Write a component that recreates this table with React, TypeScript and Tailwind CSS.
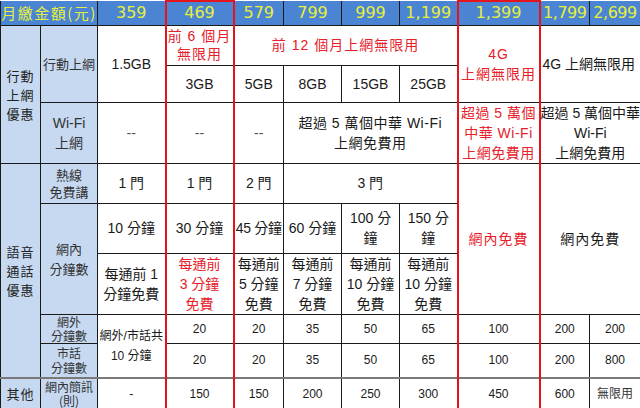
const RED_COL =
  "border-l-2 border-r-2 border-l-[#e3141c] border-r-[#e3141c]";
const TD = "border border-[#1a1a1a] p-0 text-center align-middle";
const CAT =
  "border border-[#1a1a1a] p-0 text-center align-middle bg-[#c6d9f1] font-['Noto_Sans_CJK_TC',sans-serif] text-[13px] leading-[19px] tracking-[1px] text-[#222]";
// sub column: size / leading / font are added per cell
const SUB =
  "border border-[#1a1a1a] p-0 text-center align-middle bg-[#c6d9f1] text-[#333]";
const CJK = "font-['Noto_Sans_CJK_TC',sans-serif]";
const HEAD =
  "border border-[#1a1a1a] border-t-0 p-0 text-center align-middle font-['DejaVu_Sans',sans-serif] text-[16px] font-normal text-[#e6f03c]";
const RED = "text-[#e8202a]";
const TOP_GRAY = "border-t-2 border-t-[#7a7a7a]";

function Lines({ children }: { children: string }) {
  const parts = children.split("\n");
  return (
    <>
      {parts.map((p, i) => (
        <div key={i} className="whitespace-nowrap">
          {p}
        </div>
      ))}
    </>
  );
}

export default function App() {
  const widths = [40, 57, 68, 68, 50, 58, 58, 58, 82, 50, 51];

  return (
    <div className="w-[640px] h-[408px] overflow-hidden bg-white">
      <table className="w-[640px] table-fixed border-collapse font-['Liberation_Sans','Noto_Sans_CJK_TC',sans-serif] text-[14px] leading-[20px] text-[#1a1a1a]">
        <colgroup>
          {widths.map((w, i) => (
            <col key={i} style={{ width: w }} />
          ))}
        </colgroup>
        <tbody>
          {/* header */}
          <tr className="h-[24px] bg-[#4a84d2]">
            <th
              colSpan={2}
              className="border border-[#1a1a1a] border-t-0 p-0 text-center align-middle font-['Noto_Sans_CJK_TC',sans-serif] text-[15px] font-normal tracking-[1.5px] text-[#e6f03c] whitespace-nowrap"
            >
              月繳金額(元)
            </th>
            <th className={HEAD}>359</th>
            <th className={`${HEAD} ${RED_COL} border-t-2 border-t-[#e3141c]`}>469</th>
            <th className={HEAD}>579</th>
            <th className={HEAD}>799</th>
            <th className={HEAD}>999</th>
            <th className={HEAD}>1,199</th>
            <th className={`${HEAD} ${RED_COL} border-t-2 border-t-[#e3141c]`}>1,399</th>
            <th className={`${HEAD} tracking-[-0.5px]`}>1,799</th>
            <th className={`${HEAD} tracking-[-0.5px]`}>2,699</th>
          </tr>

          {/* 行動上網 */}
          <tr className="h-[40px]">
            <td rowSpan={3} className={CAT}>
              <Lines>{"行動\n上網\n優惠"}</Lines>
            </td>
            <td rowSpan={2} className={`${SUB} ${CJK} text-[13px]`}>
              行動上網
            </td>
            <td rowSpan={2} className={TD}>
              1.5GB
            </td>
            <td className={`${TD} ${RED_COL} ${RED} leading-[18px] tracking-[1px]`}>
              <Lines>{"前 6 個月\n無限用"}</Lines>
            </td>
            <td colSpan={4} className={`${TD} ${RED} tracking-[1px]`}>
              前 12 個月上網無限用
            </td>
            <td rowSpan={2} className={`${TD} ${RED_COL} ${RED} tracking-[1px]`}>
              <Lines>{"4G\n上網無限用"}</Lines>
            </td>
            <td rowSpan={2} colSpan={2} className={`${TD} text-left pl-[2px]`}>
              4G 上網無限用
            </td>
          </tr>
          <tr className="h-[37px]">
            <td className={`${TD} ${RED_COL}`}>3GB</td>
            <td className={TD}>5GB</td>
            <td className={TD}>8GB</td>
            <td className={TD}>15GB</td>
            <td className={TD}>25GB</td>
          </tr>

          {/* Wi-Fi */}
          <tr className="h-[60px]">
            <td className={`${SUB} text-[14px] leading-[20px]`}>
              <Lines>{"Wi-Fi\n上網"}</Lines>
            </td>
            <td className={`${TD} text-[#555]`}>--</td>
            <td className={`${TD} ${RED_COL} text-[#555]`}>--</td>
            <td className={`${TD} text-[#555]`}>--</td>
            <td colSpan={3} className={`${TD} tracking-[0.5px]`}>
              <Lines>{"超過 5 萬個中華  Wi-Fi\n上網免費用"}</Lines>
            </td>
            <td className={`${TD} ${RED_COL} ${RED} tracking-[0.5px]`}>
              <Lines>{"超過 5 萬個\n中華 Wi-Fi\n上網免費用"}</Lines>
            </td>
            <td colSpan={2} className={TD}>
              <Lines>{"超過 5 萬個中華\nWi-Fi\n上網免費用"}</Lines>
            </td>
          </tr>

          {/* 熱線 */}
          <tr className="h-[40px]">
            <td rowSpan={5} className={CAT}>
              <Lines>{"語音\n通話\n優惠"}</Lines>
            </td>
            <td className={`${SUB} ${CJK} text-[13px] leading-[17px]`}>
              <Lines>{"熱線\n免費講"}</Lines>
            </td>
            <td className={TD}>1 門</td>
            <td className={`${TD} ${RED_COL}`}>1 門</td>
            <td className={TD}>2 門</td>
            <td colSpan={3} className={TD}>
              3 門
            </td>
            <td rowSpan={3} className={`${TD} ${RED_COL} ${RED} tracking-[1px]`}>
              網內免費
            </td>
            <td rowSpan={3} colSpan={2} className={`${TD} tracking-[1px]`}>
              網內免費
            </td>
          </tr>

          {/* 網內 */}
          <tr className="h-[50px]">
            <td rowSpan={2} className={`${SUB} ${CJK} text-[13px] leading-[20px]`}>
              <Lines>{"網內\n分鐘數"}</Lines>
            </td>
            <td className={TD}>10 分鐘</td>
            <td className={`${TD} ${RED_COL}`}>30 分鐘</td>
            <td className={`${TD} tracking-[-0.3px]`}>45 分鐘</td>
            <td className={TD}>60 分鐘</td>
            <td className={TD}>
              <Lines>{"100 分\n鐘"}</Lines>
            </td>
            <td className={TD}>
              <Lines>{"150 分\n鐘"}</Lines>
            </td>
          </tr>
          <tr className="h-[59px]">
            <td className={TD}>
              <Lines>{"每通前 1\n分鐘免費"}</Lines>
            </td>
            <td className={`${TD} ${RED_COL} ${RED}`}>
              <Lines>{"每通前\n3 分鐘\n免費"}</Lines>
            </td>
            <td className={TD}>
              <Lines>{"每通前\n5 分鐘\n免費"}</Lines>
            </td>
            <td className={TD}>
              <Lines>{"每通前\n7 分鐘\n免費"}</Lines>
            </td>
            <td className={TD}>
              <Lines>{"每通前\n10 分鐘\n免費"}</Lines>
            </td>
            <td className={TD}>
              <Lines>{"每通前\n10 分鐘\n免費"}</Lines>
            </td>
          </tr>

          {/* 網外 */}
          <tr className="h-[29px] text-[12px] leading-[14px]">
            <td className={`${SUB} ${CJK} text-[12px] leading-[14px]`}>
              <Lines>{"網外\n分鐘數"}</Lines>
            </td>
            <td rowSpan={2} className={`${TD} text-[12px] leading-[20px]`}>
              <Lines>{"網外/市話共\n10 分鐘"}</Lines>
            </td>
            <td className={`${TD} ${RED_COL}`}>20</td>
            <td className={TD}>20</td>
            <td className={TD}>35</td>
            <td className={TD}>50</td>
            <td className={TD}>65</td>
            <td className={`${TD} ${RED_COL}`}>100</td>
            <td className={TD}>200</td>
            <td className={TD}>200</td>
          </tr>

          {/* 市話 */}
          <tr className="h-[35px] text-[12px] leading-[14px]">
            <td className={`${SUB} ${CJK} text-[12px] leading-[15px]`}>
              <Lines>{"市話\n分鐘數"}</Lines>
            </td>
            <td className={`${TD} ${RED_COL}`}>20</td>
            <td className={TD}>20</td>
            <td className={TD}>35</td>
            <td className={TD}>50</td>
            <td className={TD}>65</td>
            <td className={`${TD} ${RED_COL}`}>100</td>
            <td className={TD}>200</td>
            <td className={TD}>800</td>
          </tr>

          {/* 其他 */}
          <tr className="h-[31px] text-[12px] leading-[14px]">
            <td className={`${CAT} ${TOP_GRAY}`}>其他</td>
            <td className={`${SUB} ${CJK} ${TOP_GRAY} text-[12px] leading-[14px]`}>
              <Lines>{"網內簡訊\n(則)"}</Lines>
            </td>
            <td className={`${TD} ${TOP_GRAY}`}>-</td>
            <td className={`${TD} ${RED_COL} ${TOP_GRAY}`}>150</td>
            <td className={`${TD} ${TOP_GRAY}`}>150</td>
            <td className={`${TD} ${TOP_GRAY}`}>200</td>
            <td className={`${TD} ${TOP_GRAY}`}>250</td>
            <td className={`${TD} ${TOP_GRAY}`}>300</td>
            <td className={`${TD} ${RED_COL} ${TOP_GRAY}`}>450</td>
            <td className={`${TD} ${TOP_GRAY}`}>600</td>
            <td className={`${TD} ${TOP_GRAY} text-[#333]`}>無限用</td>
          </tr>
        </tbody>
      </table>
    </div>
  );
}
